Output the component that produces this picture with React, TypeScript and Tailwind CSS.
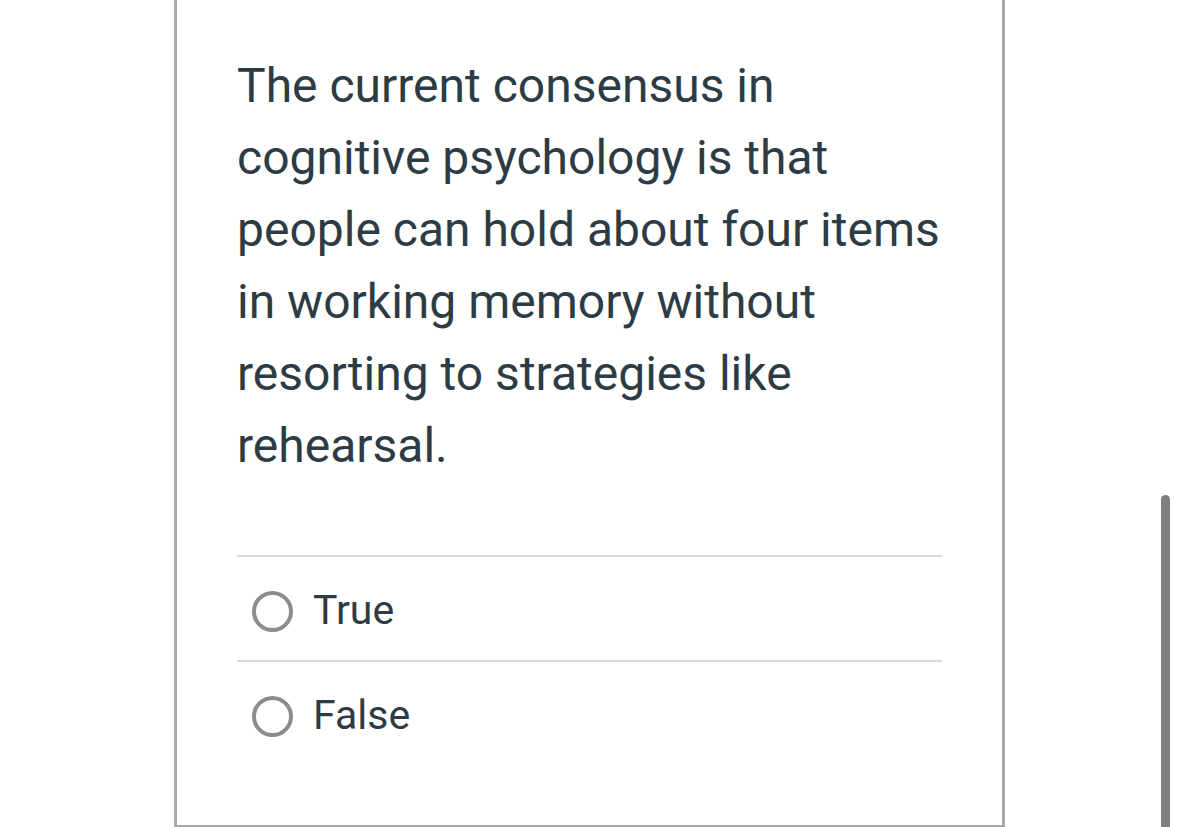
export default function App() {
  const options = ["True", "False"];
  return (
    <div
      className="relative h-[827px] w-full overflow-hidden bg-white"
      style={{ fontFamily: "Roboto, 'Noto Sans', sans-serif" }}
    >
      <div className="mx-auto w-[831px] border-x-[3px] border-b-[3px] border-[#a9a9a9] px-[60px] pt-[50px] pb-[60px]">
        <p className="text-[48px] leading-[72px] text-[#2d3b45]">
          The current consensus in cognitive psychology is that people can hold about four items in working memory
          without resorting to strategies like rehearsal.
        </p>
        <div className="mt-[73px]">
          {options.map((label) => (
            <div key={label} className="border-t-2 border-[#dadada]">
              <label className="flex h-[103px] items-center gap-[20px] pl-[15px]">
                <span className="h-[41px] w-[41px] translate-y-[3px] rounded-full border-4 border-[#8c8c8c]" />
                <span className="translate-y-[2px] text-[41px] text-[#2d3b45]">{label}</span>
              </label>
            </div>
          ))}
        </div>
      </div>
      {/* scrollbar thumb */}
      <div className="absolute right-[9px] top-[495px] h-[340px] w-[9px] rounded-t-full bg-[#808080]" />
    </div>
  );
}
